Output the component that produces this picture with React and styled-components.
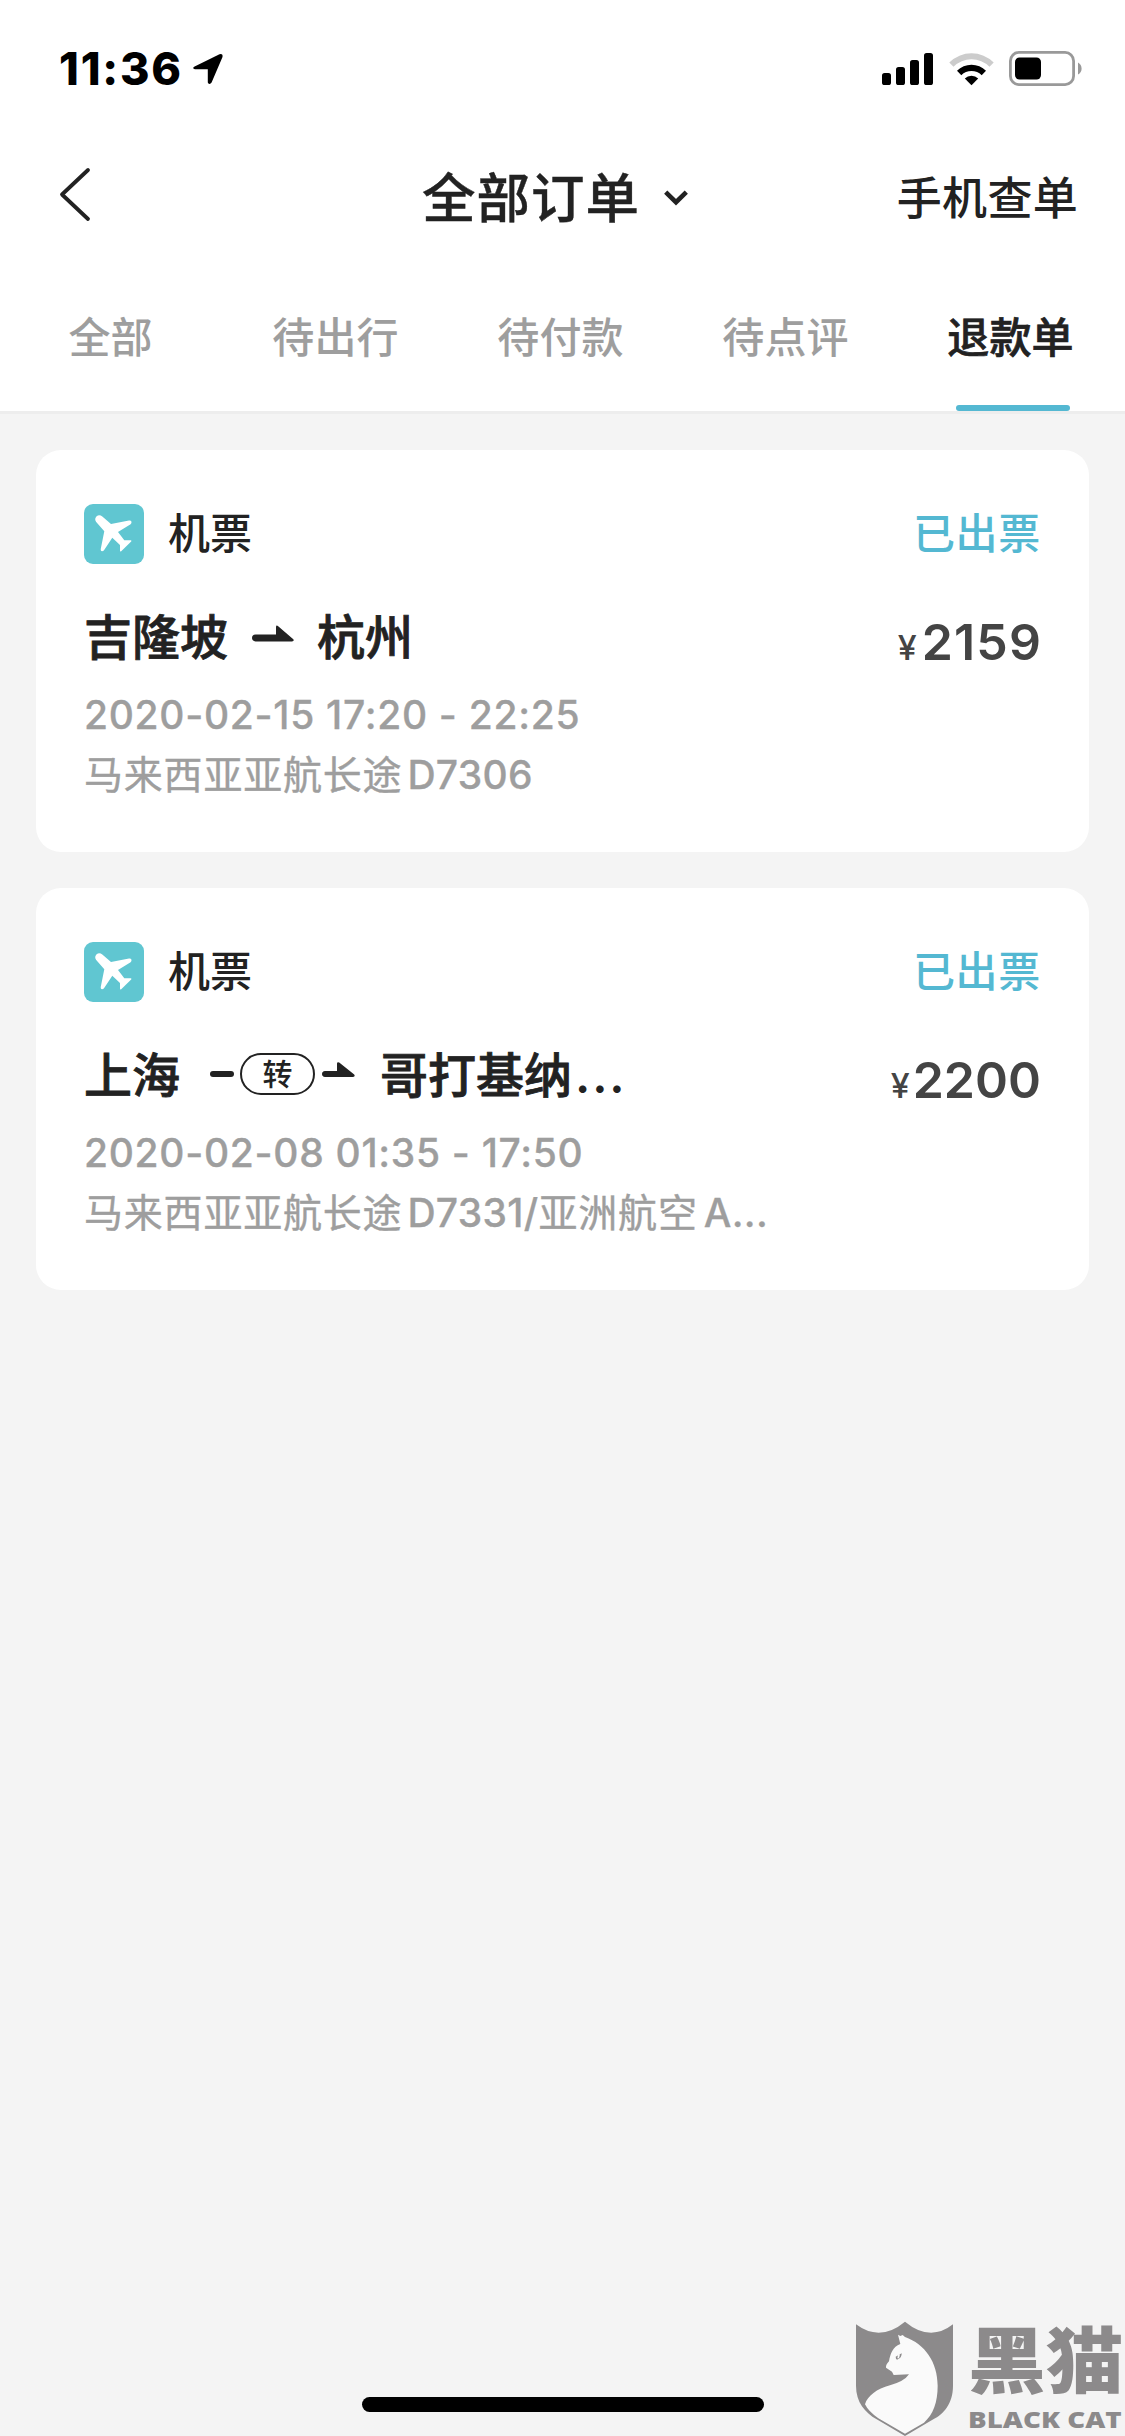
import React from "react";
import styled, { createGlobalStyle } from "styled-components";

const GlobalStyle = createGlobalStyle`
  * { box-sizing: border-box; }
  body {
    margin: 0;
    background: #f4f4f4;
    font-family: Inter, "Noto Sans CJK SC", sans-serif;
    color: #222;
  }
`;

const Screen = styled.div`
  width: 1125px;
  height: 2436px;
  position: relative;
  overflow: hidden;
  background: #f4f4f4;
`;

const Header = styled.header`
  background: #fff;
  border-bottom: 3px solid #ededed;
`;

const StatusBar = styled.div`
  height: 132px;
  padding: 6px 42px 0 59px;
  display: flex;
  align-items: center;
  justify-content: space-between;
`;

const StatusGroup = styled.div`
  display: flex;
  align-items: center;
  gap: ${(p) => p.$gap}px;
`;

const Clock = styled.span`
  font-size: 45px;
  font-weight: 800;
  line-height: 52px;
  letter-spacing: 1.8px;
  color: #000;
`;

const NavBar = styled.nav`
  height: 132px;
  padding: 0 47px 0 58px;
  display: grid;
  grid-template-columns: 1fr auto 1fr;
  align-items: center;
`;

const BackIcon = styled.svg`
  display: block;
  width: 34px;
  height: 56px;
  margin-top: -8px;
`;

const TitleButton = styled.div`
  display: flex;
  align-items: center;
  gap: 24px;
  margin-right: 26px;
`;

const Title = styled.h1`
  margin: 0;
  padding-top: 1px;
  font-size: 53.5px;
  font-weight: 500;
  line-height: 64px;
  letter-spacing: 1px;
  -webkit-text-stroke: 0.4px #222;
`;

const NavAction = styled.span`
  justify-self: end;
  padding-top: 2px;
  font-size: 45px;
  font-weight: 500;
  line-height: 60px;
  letter-spacing: 0.3px;
`;

const TabBar = styled.div`
  height: 147px;
  display: grid;
  grid-template-columns: repeat(5, 1fr);
`;

const Tab = styled.div`
  position: relative;
  display: flex;
  align-items: center;
  justify-content: center;
  padding: 1px 4px 0 0;
  font-size: 42px;
  line-height: 60px;
  letter-spacing: 0.1px;
  font-weight: 500;
  color: ${(p) => (p.$active ? "#222" : "#9e9e9e")};
  -webkit-text-stroke: ${(p) => (p.$active ? "0.7px #222" : "0")};
`;

const TabIndicator = styled.i`
  position: absolute;
  left: 56px;
  bottom: 0;
  width: 114px;
  height: 6px;
  border-radius: 3px;
  background: #54b8d2;
`;

const OrderList = styled.main`
  padding: 36px;
  display: flex;
  flex-direction: column;
  gap: 36px;
`;

const Card = styled.article`
  height: 402px;
  border-radius: 25px;
  background: #fff;
  padding: 54px 48px 0;
`;

const CardHead = styled.div`
  height: 60px;
  display: flex;
  align-items: center;
`;

const IconTile = styled.span`
  width: 60px;
  height: 60px;
  border-radius: 9px;
  background: #60c6d1;
`;

const Category = styled.span`
  margin-left: 24px;
  font-size: 42px;
  font-weight: 500;
  line-height: 60px;
`;

const Status = styled.span`
  margin-left: auto;
  font-size: 42px;
  font-weight: 500;
  line-height: 60px;
  letter-spacing: 0.7px;
  color: #54b8d2;
`;

const CardBody = styled.div`
  display: flex;
  justify-content: space-between;
  margin-top: 40px;
`;

const Route = styled.div`
  height: 64px;
  display: flex;
  align-items: center;
  font-size: 48px;
  font-weight: 500;
  line-height: 64px;
`;

const City = styled.span`
  padding-top: 4px;
  -webkit-text-stroke: 0.8px #222;
`;

const Ellipsis = styled.span`
  font-weight: 600;
  letter-spacing: 1.8px;
  margin-left: 3px;
  -webkit-text-stroke: 0;
`;

const RouteMark = styled.span`
  height: 42px;
  display: flex;
  align-items: center;
  margin: ${(p) => p.$margin};
`;

const Dash = styled.i`
  width: 24px;
  height: 6px;
  border-radius: 3px;
  background: #222;
`;

const TransferPill = styled.span`
  width: 75px;
  height: 42px;
  margin: 0 7px 0 6px;
  border: 2px solid #222;
  border-radius: 21px;
  font-size: 30px;
  font-weight: 500;
  line-height: 38px;
  text-align: center;
`;

const ArrowSvg = styled.svg`
  display: block;
  margin-top: ${(p) => p.$top}px;
`;

const Detail = styled.div`
  font-size: 39px;
  font-weight: 500;
  line-height: 60px;
  letter-spacing: ${(p) => p.$spacing}px;
  margin-top: ${(p) => p.$top || 0}px;
  color: #9e9e9e;
  white-space: nowrap;
  -webkit-text-stroke: 0.3px #9e9e9e;
`;

const Cjk = styled.span`
  font-weight: 400;
  letter-spacing: 0.8px;
  margin-right: ${(p) => p.$after || 0}px;
  -webkit-text-stroke: 0.4px #9e9e9e;
`;

const Price = styled.div`
  margin-top: 6px;
  display: flex;
  align-items: baseline;
  gap: ${(p) => p.$gap}px;
  height: 60px;
  font-size: 50px;
  font-weight: 600;
  line-height: 64px;
  color: #444;
`;

const Currency = styled.span`
  font-size: 34px;
  font-weight: 500;
`;

const Amount = styled.span`
  letter-spacing: ${(p) => p.$spacing}px;
  margin-right: ${(p) => -p.$spacing}px;
`;

const HomeIndicator = styled.div`
  position: absolute;
  left: 362px;
  bottom: 24px;
  width: 402px;
  height: 15px;
  border-radius: 8px;
  background: #000;
`;

const Watermark = styled.div`
  position: absolute;
  right: 0;
  bottom: 0;
  width: 270px;
  height: 116px;
  display: flex;
  gap: 13px;
  color: #8c8a8b;
`;

const WatermarkText = styled.div`
  width: 156px;
  padding-top: 6px;
`;

const BrandCn = styled.div`
  font-size: 72px;
  font-weight: 900;
  line-height: 70px;
  height: 79px;
  white-space: nowrap;
  transform: scaleX(1.08);
  transform-origin: left center;
`;

const BrandEn = styled.div`
  font-family: "Open Sans", sans-serif;
  font-size: 22px;
  font-weight: 800;
  line-height: 28px;
  white-space: nowrap;
  transform: scaleX(1.26);
  transform-origin: left center;
`;

function PlaneIcon() {
  return (
    <IconTile>
      <svg width="60" height="60" viewBox="0 0 60 60" fill="#fff">
        <path d="M12.2 18 L20.3 27.3 L16.7 45.3 Q16.6 47.3 18 47.3 Q19.2 47.3 20 46.2 L28.3 33.7 L36 41 V46.8 Q36.2 48 37.2 47.2 L47.2 37.6 Q48 36.5 46.8 36.3 L40.3 36.3 L34 28 L46.6 20.2 Q47.9 19.2 47.4 17.6 Q46.8 16.1 45 16.5 L27 20 L18.3 12.6 Q15.5 10 12.6 12.2 Q10 15 12.2 18 Z" />
      </svg>
    </IconTile>
  );
}

function DirectArrow() {
  return (
    <RouteMark $margin="0 23px 0 24px">
      <ArrowSvg width="42" height="17" viewBox="0 0 42 17" $top={-5} fill="#222">
        <path d="M3.5 9.6 H24 V2 Q24.2 -0.4 26.2 1.2 L41.3 14.2 Q42.6 16.2 40 16.4 H3.5 Q0 16 0 13 Q0 10 3.5 9.6 Z" />
      </ArrowSvg>
    </RouteMark>
  );
}

function TransferArrow() {
  return (
    <RouteMark $margin="0 25px 0 30px">
      <Dash />
      <TransferPill>转</TransferPill>
      <ArrowSvg width="33" height="15" viewBox="0 0 33 15" $top={-9} fill="#222">
        <path d="M3 9 H15 V1.4 Q15.3 -0.6 17.2 0.6 L32.2 12.4 Q33.6 14.6 31 15 H3 Q0 14.7 0 12 Q0 9.3 3 9 Z" />
      </ArrowSvg>
    </RouteMark>
  );
}

function Order({ from, to, transfer, time, flight, price, priceSpacing = 0 }) {
  return (
    <Card>
      <CardHead>
        <PlaneIcon />
        <Category>机票</Category>
        <Status>已出票</Status>
      </CardHead>
      <CardBody>
        <div>
          <Route>
            <City>{from}</City>
            {transfer ? <TransferArrow /> : <DirectArrow />}
            <City>{to}</City>
          </Route>
          <Detail $top={17} $spacing={0.7}>{time}</Detail>
          <Detail $spacing={0.3}>{flight}</Detail>
        </div>
        <Price $gap={priceSpacing ? 5 : 3}>
          <Currency>¥</Currency>
          <Amount $spacing={priceSpacing}>{price}</Amount>
        </Price>
      </CardBody>
    </Card>
  );
}

const TABS = ["全部", "待出行", "待付款", "待点评", "退款单"];

export default function App() {
  return (
    <>
      <GlobalStyle />
      <Screen>
        <Header>
          <StatusBar>
            <StatusGroup $gap={10}>
              <Clock>11:36</Clock>
              <svg width="30" height="32" viewBox="0 0 30 32">
                <path d="M1.6 13.4 L26.5 1.2 Q30.4 0.2 29.4 4.2 L18.6 29.6 Q16.4 32.6 14.8 29.4 V16.2 H2 Q-1.4 15.4 1.6 13.4 Z" />
              </svg>
            </StatusGroup>
            <StatusGroup $gap={15}>
              <svg width="52" height="34" viewBox="0 0 52 34">
                <rect x="0" y="21" width="9" height="12" rx="2.6" />
                <rect x="14" y="15" width="9" height="18" rx="2.6" />
                <rect x="28" y="8" width="9" height="25" rx="2.6" />
                <rect x="42" y="1" width="9" height="32" rx="2.6" />
              </svg>
              <svg width="45" height="34" viewBox="0 0 45 34">
                <path d="M0.3 10.5 A31.5 31.5 0 0 1 44.7 10.5 L40.5 14.8 A25.5 25.5 0 0 0 4.5 14.8 Z" fill="#ccc" />
                <path d="M8 18.8 A20.5 20.5 0 0 1 37 18.8 L32.7 23.2 A14.5 14.5 0 0 0 12.3 23.2 Z" />
                <path d="M15.8 26.6 A9.5 9.5 0 0 1 29.2 26.6 L22.5 33.2 Z" />
              </svg>
              <svg width="74" height="36" viewBox="0 0 74 36">
                <rect x="1.4" y="1.4" width="63.2" height="32.2" rx="8.5" fill="none" stroke="#999" strokeWidth="2.8" />
                <rect x="6" y="6.5" width="26" height="22" rx="4.5" />
                <path d="M69 11.5 Q72.6 13.5 72.6 17.5 Q72.6 21.5 69 23.5 Z" fill="#999" />
              </svg>
            </StatusGroup>
          </StatusBar>
          <NavBar>
            <BackIcon viewBox="0 0 34 56" fill="none" stroke="#222" strokeWidth="3.8" strokeLinecap="round" strokeLinejoin="round">
              <path d="M30 4 L4 28.5 L30 53" />
            </BackIcon>
            <TitleButton>
              <Title>全部订单</Title>
              <svg width="24" height="16" viewBox="0 0 24 16" fill="none" stroke="#222" strokeWidth="4.6">
                <path d="M1.7 2.2 L12 12.2 L22.3 2.2" />
              </svg>
            </TitleButton>
            <NavAction>手机查单</NavAction>
          </NavBar>
          <TabBar>
            {TABS.map((label, i) => (
              <Tab key={label} $active={i === 4}>
                {label}
                {i === 4 && <TabIndicator />}
              </Tab>
            ))}
          </TabBar>
        </Header>
        <OrderList>
          <Order
            from="吉隆坡"
            to="杭州"
            time="2020-02-15 17:20 - 22:25"
            flight={<><Cjk $after={5}>马来西亚亚航长途</Cjk>D7306</>}
            price="2159"
            priceSpacing={1.2}
          />
          <Order
            transfer
            from="上海"
            to={<>哥打基纳<Ellipsis>...</Ellipsis></>}
            time="2020-02-08 01:35 - 17:50"
            flight={<><Cjk $after={5}>马来西亚亚航长途</Cjk>D7331/<Cjk $after={6}>亚洲航空</Cjk>A...</>}
            price="2200"
          />
        </OrderList>
        <HomeIndicator />
        <Watermark>
          <svg width="100" height="116" viewBox="90 88 300 348">
            <path fill="#8c8a8b" d="M93 101 Q165 155 240 93 Q315 155 384 101 V285 C384 340 355 370 325 386 L240 436 L155 386 C120 365 93 335 93 285 Z" />
            <path fill="#fafafa" d="M219 132 L226 136 L233 133 L240 139 C300 160 338 215 338 285 C338 335 325 370 297 396 L240 429 L160 383 Q130 362 120 341 C128 315 155 295 195 284 Q238 272 252 251 L206 253 L201 243 L183 231 Q182 222 192 212 C196 190 203 168 226 160 Z" />
            <path fill="#8c8a8b" d="M212 198 L230 188 Q231 202 216 207 Q212 205 212 198 Z" />
            <path fill="#fafafa" d="M219 193 L225 191 L222 203 L217 203 Z" />
          </svg>
          <WatermarkText>
            <BrandCn>黑猫</BrandCn>
            <BrandEn>BLACK CAT</BrandEn>
          </WatermarkText>
        </Watermark>
      </Screen>
    </>
  );
}
